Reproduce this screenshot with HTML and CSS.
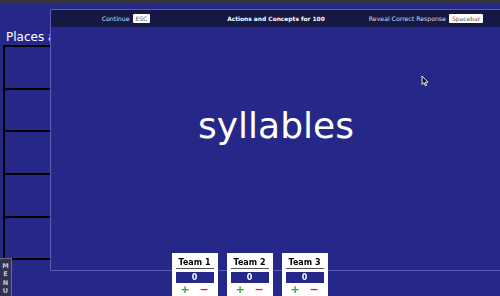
FILE: index.html
```html
<!DOCTYPE html>
<html lang="en">
<head>
<meta charset="utf-8">
<title>Jeopardy board</title>
<link rel="stylesheet" href="styles.css">
</head>
<body>
<div class="topstrip"></div>
<main class="board">
  <section class="category">
    <h2 class="category-title">Places and Things</h2>
    <div class="cells">
      <div class="cell"></div>
      <div class="cell"></div>
      <div class="cell"></div>
      <div class="cell"></div>
      <div class="cell"></div>
    </div>
  </section>
</main>

<div class="menu-tab">
  <span>M</span><span>E</span><span>N</span><span>U</span>
</div>

<div class="modal">
  <header class="modal-bar">
    <div class="bar-slot"><span class="bar-label">Continue</span><kbd class="key">ESC</kbd></div>
    <div class="bar-slot"><span class="bar-title">Actions and Concepts for 100</span></div>
    <div class="bar-slot"><span class="bar-label">Reveal Correct Response</span><kbd class="key">Spacebar</kbd></div>
  </header>
  <div class="modal-body">
    <p class="clue">syllables</p>
  </div>
</div>

<div class="scoreboard">
  <div class="team">
    <div class="team-name">Team 1</div>
    <div class="team-score">0</div>
    <div class="team-controls"><span class="plus">+</span><span class="minus">&minus;</span></div>
  </div>
  <div class="team">
    <div class="team-name">Team 2</div>
    <div class="team-score">0</div>
    <div class="team-controls"><span class="plus">+</span><span class="minus">&minus;</span></div>
  </div>
  <div class="team">
    <div class="team-name">Team 3</div>
    <div class="team-score">0</div>
    <div class="team-controls"><span class="plus">+</span><span class="minus">&minus;</span></div>
  </div>
</div>

<svg class="cursor" width="8" height="12" viewBox="0 0 8 12">
  <path d="M1 1 L1 9.5 L3 7.6 L4.4 10.8 L5.6 10.3 L4.3 7.2 L7 7.2 Z" fill="#111" stroke="#fff" stroke-width="0.9" stroke-linejoin="round"/>
</svg>
</body>
</html>
```

FILE: styles.css
```css
html, body {
  margin: 0;
  padding: 0;
}
body {
  width: 500px;
  height: 296px;
  overflow: hidden;
  background: #252888;
  font-family: "DejaVu Sans", Verdana, sans-serif;
  color: #fff;
}
.topstrip {
  height: 3px;
  background: #34343e;
}
.board {
  padding: 0 0 0 3px;
}
.category {
  width: 140px;
}
.category-title {
  margin: 0;
  padding: 26px 0 0 3px;
  height: 16px;
  font-size: 12px;
  line-height: 16px;
  font-weight: normal;
  color: #fff;
  white-space: nowrap;
}
.cells {
  border-left: 2px solid #000;
}
.cell {
  box-sizing: border-box;
  height: 42.7px;
  border-top: 2px solid #000;
}
.cell:last-child {
  height: 44.7px;
  border-bottom: 2px solid #000;
}

.menu-tab {
  position: fixed;
  left: 0;
  top: 258px;
  width: 12px;
  height: 40px;
  background: #30324f;
  border-top: 1px solid #6a6c80;
  border-right: 1px solid #6a6c80;
  display: flex;
  flex-direction: column;
  align-items: center;
  padding-top: 3px;
  box-sizing: border-box;
  font-size: 6.5px;
  font-weight: bold;
  line-height: 8.3px;
  color: #c4c5d4;
}

.modal {
  position: fixed;
  left: 50px;
  top: 9px;
  width: 452px;
  height: 262px;
  box-sizing: border-box;
  border: 1px solid #5a5db5;
  background: #252888;
  display: flex;
  flex-direction: column;
}
.modal-bar {
  display: grid;
  grid-template-columns: 150px 150px 150px;
  height: 17px;
  background: #151844;
  align-items: center;
  font-size: 6.2px;
}
.bar-slot {
  display: flex;
  justify-content: center;
  align-items: center;
  gap: 3px;
}
.bar-label {
  color: #dcdde8;
}
.bar-title {
  font-weight: bold;
  color: #fff;
  font-size: 5.9px;
}
.key {
  font-family: "DejaVu Sans", Verdana, sans-serif;
  font-size: 6px;
  background: #fff;
  color: #555;
  padding: 1px 3px;
  line-height: 7.5px;
  border-radius: 1px;
}
.modal-body {
  flex: 1;
  display: flex;
  justify-content: center;
}
.clue {
  margin: 77px 0 0;
  font-size: 36px;
  line-height: 44px;
  color: #fff;
}

.scoreboard {
  position: fixed;
  left: 0;
  right: 0;
  top: 253px;
  display: flex;
  justify-content: center;
  gap: 9px;
  padding-right: 1px;
}
.team {
  width: 46px;
  height: 48px;
  box-sizing: border-box;
  background: #fff;
  padding: 5px 4px 0;
  color: #000;
}
.team-name {
  font-size: 8px;
  font-weight: bold;
  line-height: 9px;
  text-align: center;
  border-bottom: 1px solid #555;
  padding-bottom: 1px;
}
.team-score {
  margin-top: 3px;
  height: 11px;
  background: #252888;
  color: #fff;
  font-size: 8px;
  font-weight: bold;
  line-height: 11px;
  text-align: center;
}
.team-controls {
  display: flex;
  justify-content: space-around;
  font-size: 11px;
  font-weight: bold;
  line-height: 14px;
}
.plus {
  color: #3f9b3f;
}
.minus {
  color: #d22040;
}

.cursor {
  position: fixed;
  left: 421px;
  top: 75px;
}
```
